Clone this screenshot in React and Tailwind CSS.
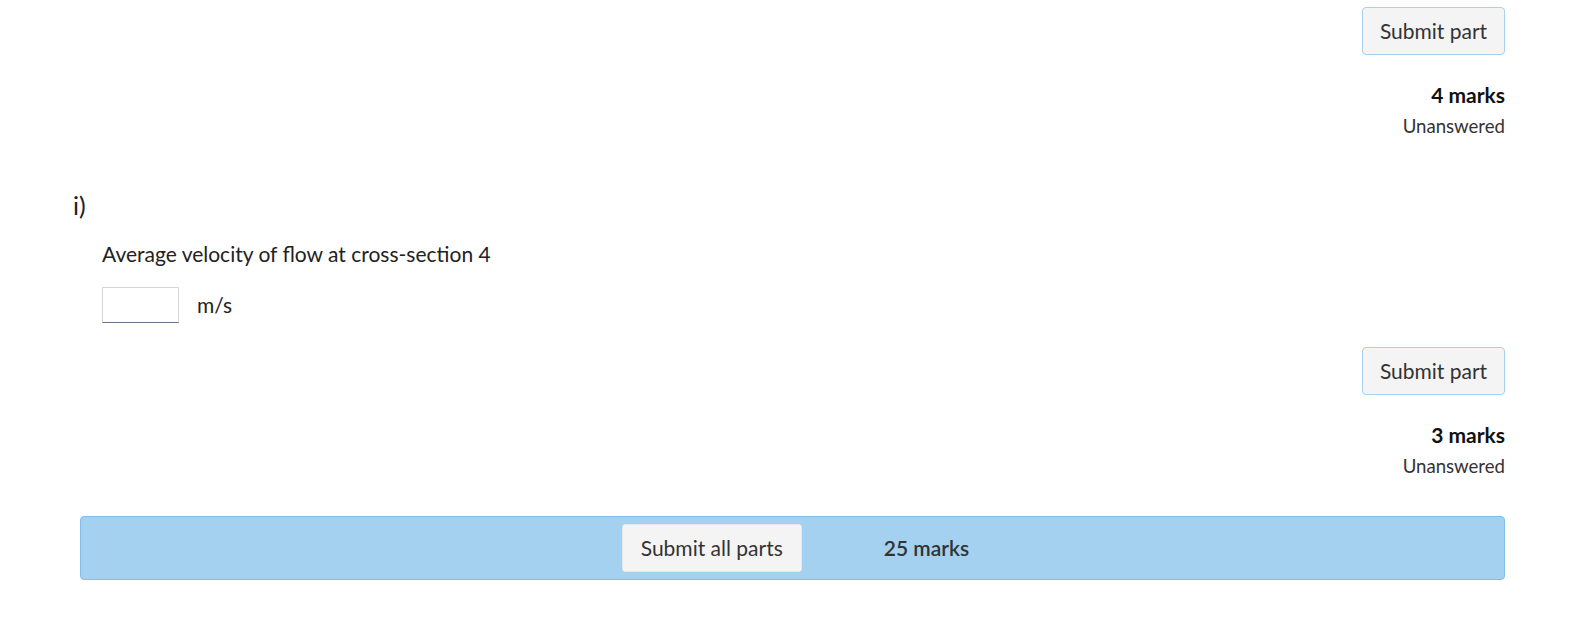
import React from 'react';

const font = { fontFamily: '"Lato", "Liberation Sans", sans-serif' };

const SubmitPart = () => (
  <button className="h-[48px] w-[143px] rounded-[4px] border border-[#a6d2f0] bg-[#f4f4f4] text-[21px] text-[#333]">
    Submit part
  </button>
);

const Marks = ({ marks }) => (
  <div className="flex flex-col items-end">
    <div className="mt-[28px] text-[21px] font-bold leading-[24px] text-[#111]">{marks} marks</div>
    <div className="mt-[9px] text-[18.6px] leading-[20px] text-[#333]">Unanswered</div>
  </div>
);

export default function App() {
  return (
    <div className="bg-white pl-[80px] pr-[71px]" style={font}>
      <div className="flex flex-col items-end pt-[7px]">
        <SubmitPart />
        <Marks marks={4} />
      </div>

      <div className="-ml-[7px] mt-[54px] text-[25px] leading-[30px] text-[#222]">i)</div>

      <div className="pl-[22px] pt-[22px]">
        <div className="text-[21px] leading-[24px] text-[#222]">Average velocity of flow at cross-section 4</div>
        <div className="mt-[21px] flex items-center gap-[18px]">
          <input
            type="text"
            className="h-[36px] w-[77px] border border-[#d6d6d6] border-b-[#62738a] bg-white outline-none"
          />
          <span className="text-[21px] text-[#222]">m/s</span>
        </div>
      </div>

      <div className="mt-[24px] flex flex-col items-end">
        <SubmitPart />
        <Marks marks={3} />
      </div>

      <div className="mt-[40px] flex h-[64px] items-center justify-center gap-[82px] rounded-[4px] border border-[#80bfe9] bg-[#a3d1ef]">
        <button className="ml-[6px] h-[48px] w-[180px] rounded-[3px] border border-[#e6e6e6] bg-[#f4f4f4] text-[21px] text-[#333]">
          Submit all parts
        </button>
        <span className="text-[21px] font-semibold text-[#333]">25 marks</span>
      </div>
    </div>
  );
}
